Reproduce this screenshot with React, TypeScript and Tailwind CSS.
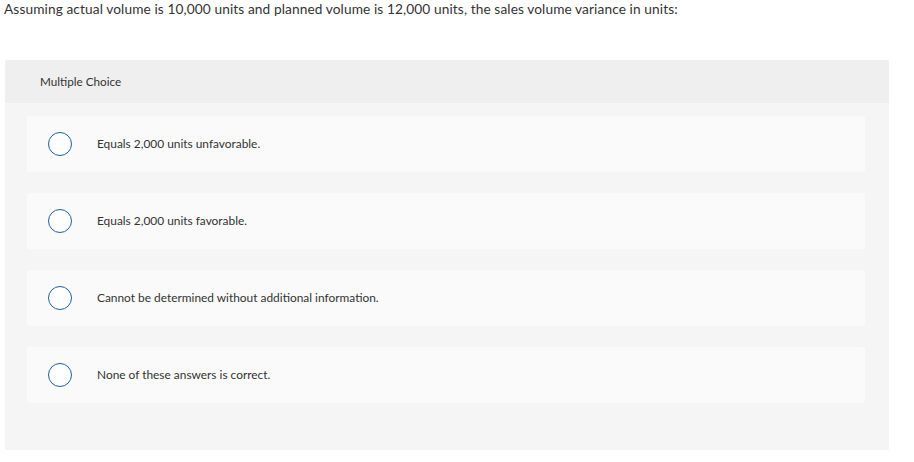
const options = [
  'Equals 2,000 units unfavorable.',
  'Equals 2,000 units favorable.',
  'Cannot be determined without additional information.',
  'None of these answers is correct.',
];

export default function App() {
  return (
    <div className="min-h-screen bg-white text-[#333] font-['Lato','Liberation_Sans',sans-serif]">
      <p className="pl-1 pt-[1px] text-[13.7px] leading-[16px] tracking-[0.1px]">
        Assuming actual volume is 10,000 units and planned volume is 12,000 units, the sales volume variance in units:
      </p>

      <div className="mt-[43px] ml-[5px] w-[884px] rounded-[2px] bg-[#f5f5f5]">
        <div className="flex h-[43px] items-center rounded-t-[2px] bg-[#efefef] pl-[35px] text-[11.7px] text-[#333]">
          Multiple Choice
        </div>
        <div className="flex flex-col gap-[21px] pl-[22px] pr-[24px] pt-[13px] pb-[47px]">
          {options.map((o) => (
            <div key={o} className="flex h-[56px] items-center rounded-[3px] bg-[#fafafa] pl-[21px]">
              <span className="h-[24px] w-[24px] shrink-0 rounded-full border-[1.5px] border-[#1d5e9f] bg-white" />
              <span className="ml-[25px] text-[11.9px] text-[#333]">{o}</span>
            </div>
          ))}
        </div>
      </div>
    </div>
  );
}
